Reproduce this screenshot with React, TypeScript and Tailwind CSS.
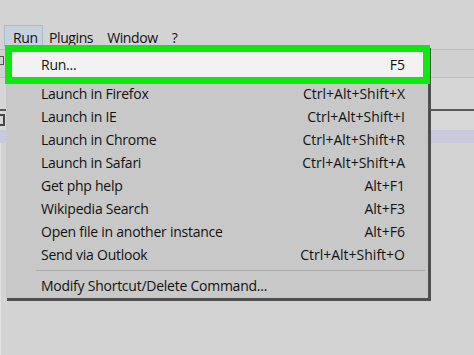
import React from "react";

const items: [string, string][] = [
  ["Launch in Firefox", "Ctrl+Alt+Shift+X"],
  ["Launch in IE", "Ctrl+Alt+Shift+I"],
  ["Launch in Chrome", "Ctrl+Alt+Shift+R"],
  ["Launch in Safari", "Ctrl+Alt+Shift+A"],
  ["Get php help", "Alt+F1"],
  ["Wikipedia Search", "Alt+F3"],
  ["Open file in another instance", "Alt+F6"],
  ["Send via Outlook", "Ctrl+Alt+Shift+O"],
];

function MenuRow({ label, keys }: { label: string; keys: string }) {
  return (
    <div className="flex h-[23px] items-center justify-between pl-[35px] pr-[23px]">
      <span>{label}</span>
      <span className="tracking-normal">{keys}</span>
    </div>
  );
}

export default function App() {
  return (
    <div
      className="relative h-[355px] w-[474px] overflow-hidden bg-[#d3d3d3] text-[14px] tracking-[-0.25px] text-[#121212]"
      style={{ fontFamily: '"Open Sans", "Noto Sans", sans-serif' }}
    >
      {/* window chrome behind the menu */}
      <div className="h-[25px]" />
      <div className="flex h-[22px] items-center pt-[3px] text-[14px] tracking-[-0.4px]">
        <div className="ml-[4px] mt-[-3px] flex h-[22px] w-[39px] items-center border border-[#a9bccd] bg-[#c5d2de] pl-[8px] pt-[3px]">
          Run
        </div>
        <span className="ml-[6px]">Plugins</span>
        <span className="ml-[14px]">Window</span>
        <span className="ml-[14px]">?</span>
      </div>
      <div className="mt-[2px] h-[28px] border-t border-[#b9b9b9] bg-[#d0d0d0]">
        <div className="ml-[-3px] mt-[6px] h-[9px] w-[7px] border border-[#555]" />
      </div>
      <div className="h-[32px] border-t border-[#bdbdbd] bg-[#d6d6d6]" />
      <div className="h-[21px] border-t-2 border-[#5a5a5a] bg-[#d8d8d8]">
        <div className="ml-[-2px] mt-[3px] h-[12px] w-[7px] border-y-2 border-r-2 border-[#444]" />
      </div>
      <div className="h-[13px] bg-[#c9c9dd]" />
      <div className="h-[215px] border-l border-[#e2e2e2] bg-[#d3d3d3]" />

      {/* dropdown menu */}
      <div className="absolute left-[6px] top-[47px] w-[422px] bg-[#c8c8c8] pb-[1px] shadow-[2px_2px_0_1px_#4f4f4f]">
        <div className="pb-[5px] pl-[6px] pr-[5px] pt-[5px]">
          <div className="flex h-[25px] items-center justify-between bg-[#f2f2f2] pl-[29px] pr-[18px] outline-[7px] outline-solid outline-[#0ee80e]">
            <span>Run...</span>
            <span className="tracking-normal">F5</span>
          </div>
        </div>
        {items.map(([label, keys]) => (
          <MenuRow key={label} label={label} keys={keys} />
        ))}
        <div className="flex h-[8px] items-center pl-[30px] pr-[3px]">
          <div className="h-px w-full bg-[#ababab]" />
        </div>
        <div className="flex h-[23px] items-center pl-[35px]">
          Modify Shortcut/Delete Command...
        </div>
      </div>
    </div>
  );
}
